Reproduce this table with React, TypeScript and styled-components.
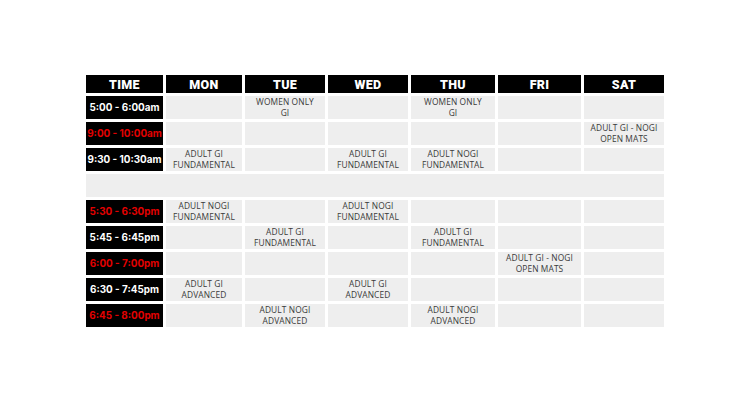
import styled, { createGlobalStyle } from "styled-components";

const GlobalStyle = createGlobalStyle`
  html, body {
    margin: 0;
    padding: 0;
    background: #ffffff;
  }
`;

const Page = styled.div`
  width: 750px;
  height: 413px;
  display: flex;
  justify-content: center;
  padding-top: 75px;
  box-sizing: border-box;
  font-family: "Open Sans", "Liberation Sans", sans-serif;
`;

const Schedule = styled.div`
  display: grid;
  grid-template-columns: 77px 76px 80px 80px 84px 83px 80px;
  grid-template-rows: 18px repeat(9, 23px);
  gap: 3px;
  align-self: flex-start;
`;

const HeaderCell = styled.div`
  background: #000000;
  color: #ffffff;
  font-family: Roboto, "Open Sans", sans-serif;
  font-weight: 900;
  font-size: 12.5px;
  letter-spacing: 0.3px;
  display: flex;
  align-items: center;
  justify-content: center;
`;

const TimeCell = styled.div<{ $red?: boolean }>`
  background: #000000;
  color: ${(p) => (p.$red ? "#e30000" : "#ffffff")};
  font-family: Inter, "Open Sans", sans-serif;
  font-weight: 700;
  font-size: 9.9px;
  line-height: 23px;
  text-align: center;
  white-space: nowrap;
`;

const ClassCell = styled.div`
  background: #eeeeee;
  color: #3a3a3a;
  font-size: 8.4px;
  line-height: 10.4px;
  letter-spacing: 0.1px;
  text-transform: uppercase;
  display: flex;
  flex-direction: column;
  align-items: center;
  justify-content: center;
  text-align: center;
`;

const BreakRow = styled.div`
  grid-column: 1 / -1;
  background: #eeeeee;
`;

type Slot = { time: string; red?: boolean; classes: (string[] | null)[] };

const days = ["MON", "TUE", "WED", "THU", "FRI", "SAT"];

const WOMEN = ["WOMEN ONLY", "GI"];
const GI_FUND = ["ADULT GI", "FUNDAMENTAL"];
const NOGI_FUND = ["ADULT NOGI", "FUNDAMENTAL"];
const OPEN = ["ADULT GI - NOGI", "OPEN MATS"];
const GI_ADV = ["ADULT GI", "ADVANCED"];
const NOGI_ADV = ["ADULT NOGI", "ADVANCED"];

const morning: Slot[] = [
  { time: "5:00 - 6:00am", classes: [null, WOMEN, null, WOMEN, null, null] },
  { time: "9:00 - 10:00am", red: true, classes: [null, null, null, null, null, OPEN] },
  { time: "9:30 - 10:30am", classes: [GI_FUND, null, GI_FUND, NOGI_FUND, null, null] },
];

const evening: Slot[] = [
  { time: "5:30 - 6:30pm", red: true, classes: [NOGI_FUND, null, NOGI_FUND, null, null, null] },
  { time: "5:45 - 6:45pm", classes: [null, GI_FUND, null, GI_FUND, null, null] },
  { time: "6:00 - 7:00pm", red: true, classes: [null, null, null, null, OPEN, null] },
  { time: "6:30 - 7:45pm", classes: [GI_ADV, null, GI_ADV, null, null, null] },
  { time: "6:45 - 8:00pm", red: true, classes: [null, NOGI_ADV, null, NOGI_ADV, null, null] },
];

const renderSlot = (slot: Slot) => [
  <TimeCell key={slot.time} $red={slot.red}>
    {slot.time}
  </TimeCell>,
  ...slot.classes.map((lines, i) => (
    <ClassCell key={`${slot.time}-${i}`}>
      {lines && lines.map((line) => <span key={line}>{line}</span>)}
    </ClassCell>
  )),
];

export default function App() {
  return (
    <>
      <GlobalStyle />
      <Page>
        <Schedule>
          <HeaderCell>TIME</HeaderCell>
          {days.map((d) => (
            <HeaderCell key={d}>{d}</HeaderCell>
          ))}
          {morning.map(renderSlot)}
          <BreakRow />
          {evening.map(renderSlot)}
        </Schedule>
      </Page>
    </>
  );
}
